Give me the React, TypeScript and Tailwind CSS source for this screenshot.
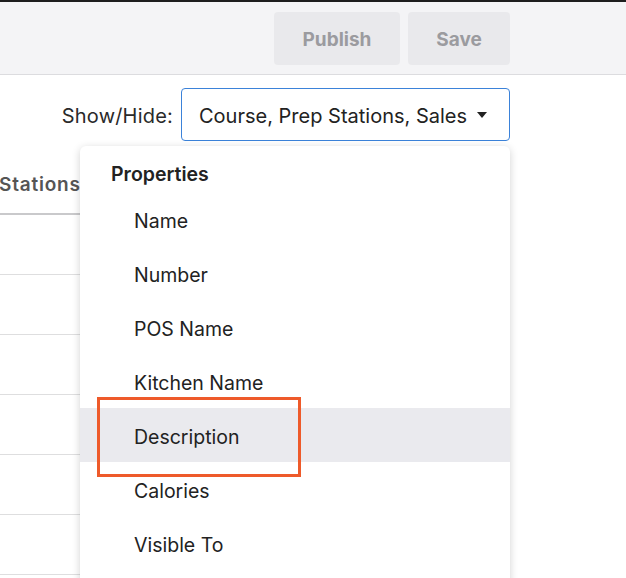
import { useState } from 'react';

const properties = ['Name', 'Number', 'POS Name', 'Kitchen Name', 'Description', 'Calories', 'Visible To'];

export default function App() {
  const [hovered] = useState('Description');

  return (
    <div
      className="relative h-[578px] w-[626px] overflow-hidden bg-white text-[#222]"
      style={{ fontFamily: 'Inter, "Noto Sans", sans-serif' }}
    >
      {/* header */}
      <div className="flex h-[75px] items-start justify-end gap-2 border-t-2 border-b border-t-[#1e1e1e] border-b-[#dcdcdf] bg-[#f4f4f6] pt-[10px] pr-[116px]">
        <button className="h-[53px] w-[126px] rounded-[4px] bg-[#e9e9ec] pt-[4px] text-[19px] font-bold text-[#9b9b9f]">
          Publish
        </button>
        <button className="h-[53px] w-[102px] rounded-[4px] bg-[#e9e9ec] pt-[4px] text-[19px] font-bold text-[#9b9b9f]">
          Save
        </button>
      </div>

      {/* show/hide */}
      <div className="mt-[13px] flex items-center justify-end gap-2 pr-[116px]">
        <span className="pt-[3px] text-[20px] tracking-[0.2px] text-[#2a2a2a]">Show/Hide:</span>
        <div className="flex h-[53px] w-[329px] items-center gap-[10px] rounded-[4px] border-[1.5px] border-[#3b82d9] pt-[3px] pl-[17px]">
          <span className="text-[20px] text-[#222]">Course, Prep Stations, Sales</span>
          <span className="mb-[2px] h-0 w-0 border-x-[5px] border-t-[6px] border-x-transparent border-t-[#222]" />
        </div>
      </div>

      {/* table behind */}
      <div className="w-[300px]">
        <div className="flex h-[74px] items-center border-b-2 border-[#c9c9cb] pt-[16px]">
          <span className="-ml-[1px] text-[19px] font-semibold tracking-[0.8px] text-[#555]">Stations</span>
        </div>
        {[0, 1, 2, 3, 4, 5].map((i) => (
          <div key={i} className="h-[60px] border-b border-[#dededf]" />
        ))}
      </div>

      {/* dropdown, runs past the bottom edge */}
      <div className="absolute top-[146px] left-[80px] h-[460px] w-[430px] rounded-[6px] bg-white shadow-[0_2px_8px_rgba(0,0,0,0.18)]">
        <div className="h-[46px] pt-[16px] pl-[31px] text-[19.5px] leading-6 font-semibold text-[#222]">Properties</div>
        {properties.map((p) => (
          <div
            key={p}
            className={
              p === hovered
                ? 'flex h-[54px] items-center bg-[#eaeaee] pt-[5px] pl-[54px] text-[19.5px] text-[#222]'
                : 'flex h-[54px] items-center pt-[5px] pl-[54px] text-[19.5px] text-[#222]'
            }
          >
            {p}
          </div>
        ))}
      </div>

      {/* annotation box */}
      <div className="absolute top-[397px] left-[97px] h-[80px] w-[204px] border-[3px] border-[#ee5a2a]" />
    </div>
  );
}
